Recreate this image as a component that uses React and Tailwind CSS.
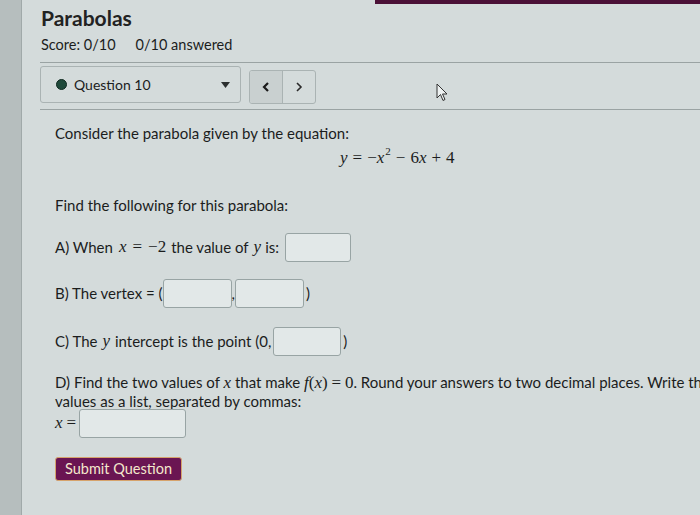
import React from "react";

function MathI({ children }) {
  return <span className="font-['Liberation_Serif',serif] italic text-[17px]">{children}</span>;
}

function Num({ children }) {
  return <span className="font-['Liberation_Serif',serif] text-[17px]">{children}</span>;
}

function Box({ w = "w-[66px]" }) {
  return <div className={`${w} h-[29px] bg-[#e2e8e8] border border-[#98a4a4] rounded-[3px]`} />;
}

function App() {
  return (
    <div className="w-[700px] h-[515px] flex bg-[#d4dbdb] overflow-hidden font-['Lato',sans-serif] text-[#1b1d1d]">
      {/* left strip */}
      <div className="w-[22px] shrink-0 bg-[#b6bebe] border-r border-[#a0a9a9]" />

      <div className="flex-1 flex flex-col min-w-0">
        <div className="self-end w-[325px] h-[4px] bg-[#4b1137]" />

        {/* header */}
        <div className="pl-[19px] pt-[2px]">
          <h1 className="text-[21px] font-bold leading-[24px] text-[#222]">Parabolas</h1>
          <div className="mt-[6px] text-[14.5px] leading-[18px] flex gap-[20px]">
            <span>Score: 0/10</span>
            <span>0/10 answered</span>
          </div>
        </div>

        {/* question bar */}
        <div className="ml-[18px] mt-[8px] h-[48px] border-t border-b border-[#9aa3a3] flex items-start gap-[8px] pt-[3px] relative">
          <div className="w-[201px] h-[37px] border border-[#aab3b3] rounded-[3px] flex items-center pl-[15px] pr-[10px]">
            <span className="w-[11px] h-[11px] rounded-full bg-[#1f4a3b] border border-[#0f2a20]" />
            <span className="ml-[7px] text-[14px]">Question 10</span>
            <svg className="ml-auto" width="9" height="6" viewBox="0 0 9 6">
              <path d="M0 0 L9 0 L4.5 6 Z" fill="#2b2f2f" />
            </svg>
          </div>
          <div className="mt-[4px] h-[34px] flex border border-[#aab3b3] rounded-[3px] overflow-hidden">
            <div className="w-[33px] flex items-center justify-center bg-[#c9d0d0] border-r border-[#aab3b3]">
              <svg width="8" height="10" viewBox="0 0 8 10">
                <path d="M6 1 L2 5 L6 9" stroke="#1a1a1a" strokeWidth="2.2" fill="none" />
              </svg>
            </div>
            <div className="w-[32px] flex items-center justify-center">
              <svg width="8" height="10" viewBox="0 0 8 10">
                <path d="M2 1 L6 5 L2 9" stroke="#2a2a2a" strokeWidth="1.6" fill="none" />
              </svg>
            </div>
          </div>
          {/* mouse cursor */}
          <svg className="absolute left-[396px] top-[20px]" width="12" height="19" viewBox="0 0 12 19">
            <path d="M1 1 L1 15 L4.5 11.5 L7 17.5 L9 16.5 L6.5 11 L11 11 Z" fill="#eef2f2" stroke="#333" strokeWidth="1" />
          </svg>
        </div>

        {/* body */}
        <div className="pl-[33px] flex flex-col text-[15px]">
          <p className="mt-[13px] leading-[20px]">Consider the parabola given by the equation:</p>
          <div className="leading-[20px] pl-[285px] mt-[4px] flex items-center">
            <MathI>y</MathI>
            <span className="mx-[5px]"><Num>=</Num></span>
            <Num>−</Num>
            <MathI>x</MathI>
            <span className="font-['Liberation_Serif',serif] text-[11px] relative -top-[7px] ml-[1px]">2</span>
            <span className="mx-[5px]"><Num>−</Num></span>
            <Num>6</Num>
            <MathI>x</MathI>
            <span className="mx-[5px]"><Num>+</Num></span>
            <Num>4</Num>
          </div>

          <p className="mt-[27px] leading-[20px]">Find the following for this parabola:</p>

          <div className="mt-[17px] h-[30px] flex items-center">
            <span>A) When</span>
            <span className="ml-[6px]"><MathI>x</MathI></span>
            <span className="mx-[6px]"><Num>=</Num></span>
            <Num>−2</Num>
            <span className="ml-[5px]">the value of</span>
            <span className="ml-[5px]"><MathI>y</MathI></span>
            <span className="ml-[4px]">is:</span>
            <div className="ml-[6px]"><Box /></div>
          </div>

          <div className="mt-[16px] h-[30px] flex items-center">
            <span>B) The vertex = (</span>
            <Box w="w-[69px]" />
            <span>,</span>
            <Box w="w-[69px]" />
            <span className="ml-[2px]">)</span>
          </div>

          <div className="mt-[18px] h-[30px] flex items-center">
            <span>C) The</span>
            <span className="mx-[5px]"><MathI>y</MathI></span>
            <span>intercept is the point (0,</span>
            <div className="ml-[2px]"><Box w="w-[68px]" /></div>
            <span className="ml-[2px]">)</span>
          </div>

          <p className="mt-[17px] leading-[18px] whitespace-nowrap">
            D) Find the two values of <MathI>x</MathI> that make <MathI>f</MathI>
            <Num>(</Num><MathI>x</MathI><Num>)</Num> <Num>=</Num> <Num>0</Num>. Round your answers to two decimal places. Write the
            <br />
            values as a list, separated by commas:
          </p>

          <div className="mt-[-2px] h-[30px] flex items-center">
            <MathI>x</MathI>
            <span className="ml-[4px] mr-[3px]"><Num>=</Num></span>
            <Box w="w-[107px]" />
          </div>

          <div className="mt-[19px]">
            <button className="h-[24px] px-[9px] bg-[#6a1552] border border-[#d6a36c] rounded-[3px] text-[14.5px] text-[#f4e8cc] leading-none">
              Submit Question
            </button>
          </div>
        </div>
      </div>
    </div>
  );
}

export default App;
